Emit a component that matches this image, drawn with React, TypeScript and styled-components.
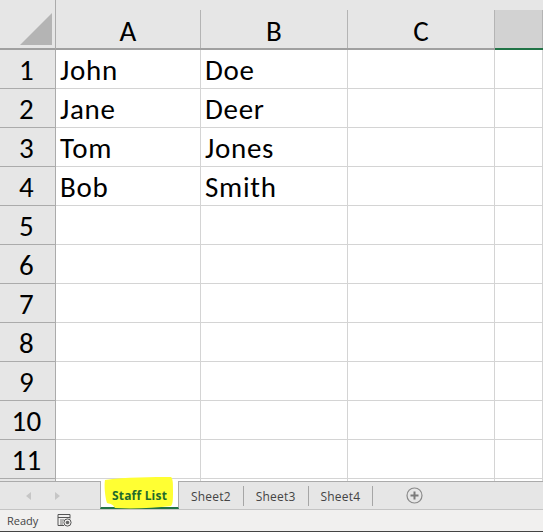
import React from 'react';
import styled, { createGlobalStyle } from 'styled-components';

const GlobalStyle = createGlobalStyle`
  html, body {
    margin: 0;
    padding: 0;
    background: #fff;
  }
  body {
    font-family: Carlito, Lato, "Liberation Sans", sans-serif;
  }
`;

const Window = styled.div`
  width: 543px;
  height: 532px;
  display: flex;
  flex-direction: column;
  overflow: hidden;
`;

const Sheet = styled.div`
  height: 481px;
  flex: none;
  overflow: hidden;
  display: grid;
  grid-template-columns: 56px 145px 147px 147px 48px;
  grid-auto-rows: 39px;
  grid-template-rows: 50px;
  background: #fff;
`;

const Corner = styled.div`
  background: #e6e6e6;
  border-right: 1px solid #ababab;
  border-bottom: 2px solid #a0a0a0;
  box-sizing: border-box;
  display: flex;
  align-items: flex-end;
  justify-content: flex-end;
  padding: 0 3px 3px 0;
`;

const ColHead = styled.div<{ $selected?: boolean }>`
  box-sizing: border-box;
  background: linear-gradient(#e6e6e6 10px, ${(p) => (p.$selected ? '#d2d2d2' : '#e6e6e6')} 10px);
  border-bottom: 2px solid ${(p) => (p.$selected ? '#217346' : '#a0a0a0')};
  position: relative;
  display: flex;
  justify-content: center;
  align-items: flex-end;
  padding: 0 1px 0 0;
  font-size: 29px;
  line-height: 34px;
  color: #000;
  &::after {
    content: '';
    position: absolute;
    right: 0;
    top: 10px;
    bottom: 0;
    width: 1px;
    background: #b4b4b4;
  }
`;

const RowHead = styled.div`
  box-sizing: border-box;
  background: #e6e6e6;
  border-right: 1px solid #ababab;
  border-bottom: 1px solid #ababab;
  display: flex;
  justify-content: center;
  align-items: flex-end;
  padding: 0 2px 0 0;
  font-size: 29px;
  line-height: 35px;
  letter-spacing: 0.4px;
  color: #000;
`;

const Cell = styled.div`
  box-sizing: border-box;
  border-right: 1px solid #d4d4d4;
  border-bottom: 1px solid #d4d4d4;
  display: flex;
  align-items: flex-end;
  padding: 0 0 0 4px;
  font-size: 29px;
  line-height: 35px;
  letter-spacing: 0.7px;
  color: #000;
  white-space: nowrap;
`;

const TabBar = styled.div`
  height: 29px;
  flex: none;
  box-sizing: border-box;
  background: #e6e6e6;
  border-top: 1px solid #ababab;
  border-bottom: 1px solid #c4c4c4;
  display: flex;
  align-items: stretch;
`;

const Nav = styled.div`
  width: 100px;
  flex: none;
  display: flex;
  align-items: center;
  gap: 22px;
  padding-left: 26px;
  box-sizing: border-box;
`;

const Arrow = styled.svg`
  width: 6px;
  height: 8px;
  fill: #c6c6c6;
`;

const ActiveTab = styled.div`
  position: relative;
  width: 79px;
  box-sizing: border-box;
  margin-top: -1px;
  background: #fff;
  border-left: 1px solid #ababab;
  border-right: 1px solid #ababab;
  border-bottom: 2px solid #217346;
  display: flex;
  align-items: center;
  justify-content: center;
  font-family: "Open Sans", "Liberation Sans", sans-serif;
  font-size: 12px;
  font-weight: 700;
  color: #1e6b2c;
`;

const Highlight = styled.svg`
  position: absolute;
  left: 3px;
  top: -4px;
  width: 70px;
  height: 32px;
  overflow: visible;
`;

const TabLabel = styled.span`
  position: relative;
  top: 1px;
  letter-spacing: 0.2px;
`;

const Tab = styled.div`
  display: flex;
  align-items: center;
  padding: 0 12px 0 12px;
  height: 20px;
  margin-top: 4px;
  border-right: 1px solid #a6a6a6;
  font-family: "Open Sans", "Liberation Sans", sans-serif;
  font-size: 12px;
  letter-spacing: 0.2px;
  color: #444;
`;

const AddButton = styled.svg`
  width: 17px;
  height: 17px;
  margin: 5px 0 0 33px;
`;

const StatusBar = styled.div`
  flex: 1;
  background: #f1f0ef;
  border-bottom: 1px solid #444;
  display: flex;
  align-items: center;
  padding: 0 0 1px 7px;
  font-family: "Open Sans", "Liberation Sans", sans-serif;
  font-size: 11px;
  color: #444;
`;

const MacroIcon = styled.svg`
  width: 15px;
  height: 14px;
  margin-left: 19px;
`;

const columns = ['A', 'B', 'C'];
const people = [
  ['John', 'Doe'],
  ['Jane', 'Deer'],
  ['Tom', 'Jones'],
  ['Bob', 'Smith']
];
const rowNumbers = [1, 2, 3, 4, 5, 6, 7, 8, 9, 10, 11];

export default function App() {
  return (
    <Window>
      <GlobalStyle />
      <Sheet>
        <Corner>
          <svg width="32" height="32" viewBox="0 0 32 32">
            <polygon points="0,32 32,0 32,32" fill="#b4b4b4" />
          </svg>
        </Corner>
        {columns.map((c) => (
          <ColHead key={c}>{c}</ColHead>
        ))}
        <ColHead $selected />
        {rowNumbers.map((n) => (
          <React.Fragment key={n}>
            <RowHead>{n}</RowHead>
            <Cell>{people[n - 1]?.[0]}</Cell>
            <Cell>{people[n - 1]?.[1]}</Cell>
            <Cell />
            <Cell />
          </React.Fragment>
        ))}
        <RowHead />
        <Cell />
        <Cell />
        <Cell />
        <Cell />
      </Sheet>
      <TabBar>
        <Nav>
          <Arrow viewBox="0 0 6 8">
            <polygon points="5,0 5,8 0,4" />
          </Arrow>
          <Arrow viewBox="0 0 6 8">
            <polygon points="1,0 1,8 6,4" />
          </Arrow>
        </Nav>
        <ActiveTab>
          <Highlight viewBox="0 0 70 32">
            <path
              d="M1 3 C20 0 50 0 67 0 C69 2 69 6 69 14 C69 22 69 27 67 29 C50 31 30 32 11 31 C9 28 8 27 3 26 C1 20 0 8 1 3 Z"
              fill="#ffff33"
            />
          </Highlight>
          <TabLabel>Staff List</TabLabel>
        </ActiveTab>
        <Tab>Sheet2</Tab>
        <Tab>Sheet3</Tab>
        <Tab>Sheet4</Tab>
        <AddButton viewBox="0 0 17 17">
          <circle cx="8.5" cy="8.5" r="7.5" fill="none" stroke="#8a8a8a" strokeWidth="1.2" />
          <path d="M8.5 4.5v8M4.5 8.5h8" stroke="#7a7a7a" strokeWidth="2" />
        </AddButton>
      </TabBar>
      <StatusBar>
        Ready
        <MacroIcon viewBox="0 0 15 14">
          <path d="M1 1.5h12M1 1.5v11h6M13 1.5v4M1 4.5h12" fill="none" stroke="#555" strokeWidth="1" />
          <path d="M3 7h4M3 9h3M3 11h3" stroke="#777" strokeWidth="1" />
          <circle cx="10.5" cy="9.5" r="3.6" fill="none" stroke="#555" strokeWidth="1" />
          <circle cx="10.5" cy="9.5" r="1.8" fill="#666" />
        </MacroIcon>
      </StatusBar>
    </Window>
  );
}
